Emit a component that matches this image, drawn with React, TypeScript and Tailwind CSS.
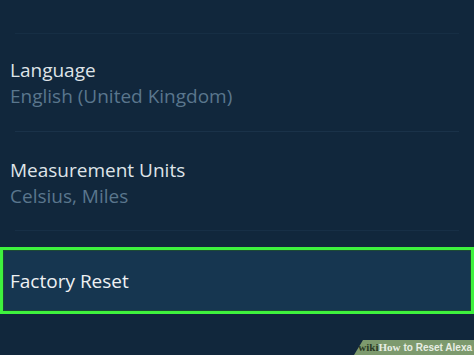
import React from "react";

export default function App() {
  const font = { fontFamily: '"Open Sans", "Noto Sans", sans-serif' };
  return (
    <div
      className="relative w-[474px] h-[355px] overflow-hidden bg-[#11273c] flex flex-col"
      style={font}
    >
      <div className="h-[33px]" />
      <div className="h-px mx-[15px] bg-[#162e44]" />
      <div className="h-[97px] pl-[10px] flex flex-col justify-center">
        <div className="text-[19px] leading-[26px] text-[#dfe4e8]">Language</div>
        <div className="text-[19px] leading-[26px] text-[#5a768d]">English (United Kingdom)</div>
      </div>
      <div className="h-px mx-[15px] bg-[#1a3249]" />
      <div className="h-[98px] pl-[10px] flex flex-col justify-center pt-[4px]">
        <div className="text-[19px] leading-[26px] text-[#dfe4e8]">Measurement Units</div>
        <div className="text-[19px] leading-[26px] text-[#5a768d]">Celsius, Miles</div>
      </div>
      <div className="h-px mx-[15px] bg-[#172f46]" />
      <div className="h-[16px]" />
      <div className="h-[67px] border-[3px] border-[#3ef23e] flex">
        <div className="flex-1 border border-[#1c4a35] bg-[#163650] flex items-center pl-[6px] pt-[1px]">
          <span className="text-[19px] leading-[26px] text-[#eef1f3]">Factory Reset</span>
        </div>
      </div>
      <div className="absolute right-0 bottom-0 h-[15px] w-[120px] bg-[#7d9a6e] [clip-path:polygon(9px_0,100%_0,100%_100%,0_100%)] flex items-center justify-end pr-[2px]">
        <span
          className="text-[11px] leading-[15px] font-bold text-[#2b3a24]"
          style={{ fontFamily: '"Liberation Serif", serif' }}
        >
          wiki
        </span>
        <span
          className="text-[11px] leading-[15px] font-bold text-[#e8eee4]"
          style={{ fontFamily: '"Liberation Serif", serif' }}
        >
          How
        </span>
        <span
          className="text-[10px] leading-[15px] font-bold text-[#e8eee4] ml-[3px]"
          style={{ fontFamily: '"Liberation Sans", sans-serif' }}
        >
          to Reset Alexa
        </span>
      </div>
    </div>
  );
}
